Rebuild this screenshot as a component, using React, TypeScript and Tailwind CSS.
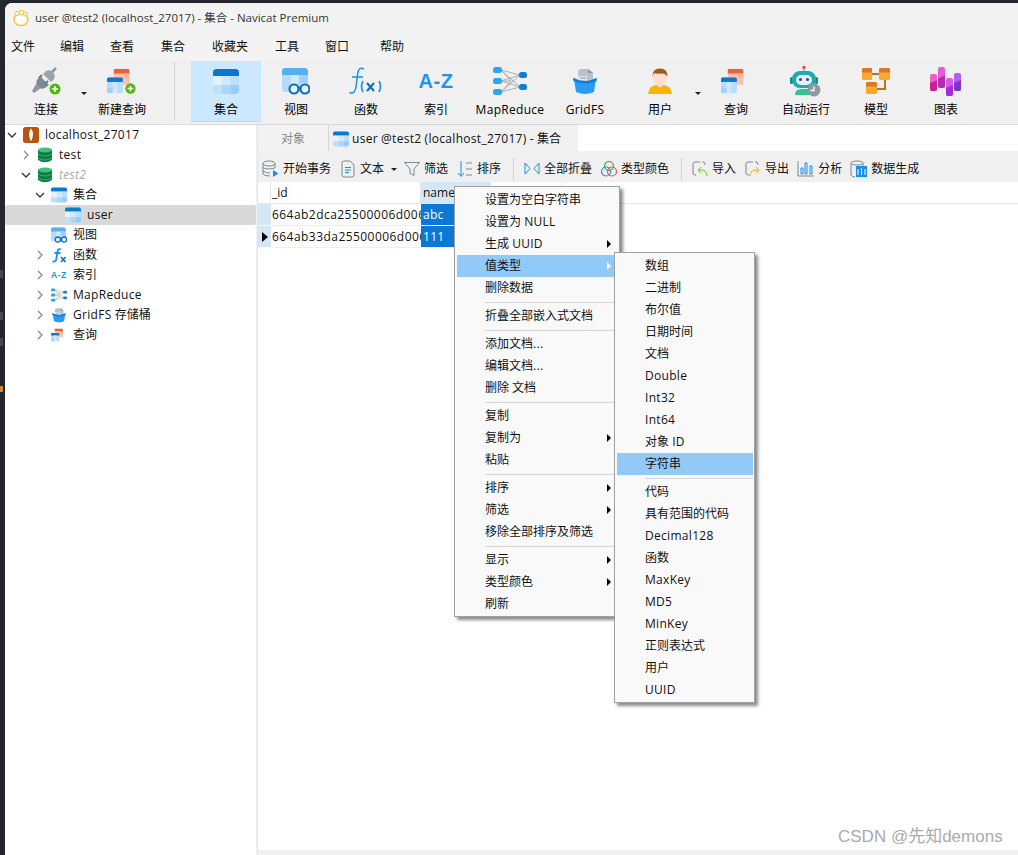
import type { ReactNode } from "react"

const font = "font-['Open_Sans','Noto_Sans_CJK_SC',sans-serif]"

// latin runs are a little narrower here than in the screenshot, cjk runs are right
function Txt({ children }: { children: string }) {
  return (
    <>
      {children.split(/([\x21-\x7e]+)/).map((part, i) =>
        i % 2 ? (
          <span key={i} className="tracking-[0.3px]">
            {part}
          </span>
        ) : (
          part
        ),
      )}
    </>
  )
}

function TableIcon({ className = "w-[26px] h-[25px]", id }: { className?: string; id: string }) {
  const rows = [
    ["#e6f3fe", "#d2e9fc", "#bcdffa"],
    ["#bfe0fb", "#a9d6f9", "#93cdf8"],
  ]
  return (
    <svg viewBox="0 0 26 25" className={className}>
      <clipPath id={id}>
        <rect width="26" height="25" rx="3.5" />
      </clipPath>
      <g clipPath={`url(#${id})`}>
        <rect width="26" height="7" fill="#0b79d0" />
        {rows.map((r, y) =>
          r.map((c, x) => <rect key={`${x}-${y}`} x={x * 8.67} y={7 + y * 9} width="8.7" height="9" fill={c} />),
        )}
      </g>
    </svg>
  )
}

function QueryIcon({ className = "w-[30px] h-[28px]", id, plus }: { className?: string; id: string; plus?: boolean }) {
  return (
    <svg viewBox="0 0 32 28" className={className}>
      <clipPath id={id + "a"}>
        <rect x="7" y="1" width="17" height="17" rx="2" />
      </clipPath>
      <g clipPath={`url(#${id}a)`}>
        <rect x="7" y="1" width="17" height="17" fill="#ffc0ae" />
        <rect x="7" y="1" width="17" height="5" fill="#e8623f" />
        <rect x="18" y="6" width="6" height="5" fill="#ffb09a" />
      </g>
      <clipPath id={id + "b"}>
        <rect x="0" y="10" width="17" height="17" rx="2" />
      </clipPath>
      <g clipPath={`url(#${id}b)`}>
        <rect x="0" y="10" width="17" height="17" fill="#b9dcfa" />
        <rect x="0" y="10" width="17" height="5" fill="#0b79d0" />
        <rect x="6" y="15" width="5" height="12" fill="#cfe7fc" />
        <rect x="0" y="21" width="6" height="6" fill="#a5d3f8" />
      </g>
      {plus && <Plus cx={25} cy={22} />}
    </svg>
  )
}

function Plus({ cx, cy }: { cx: number; cy: number }) {
  return (
    <g>
      <circle cx={cx} cy={cy} r="5.5" fill="#4fb80b" />
      <path d={`M${cx - 3} ${cy}h6M${cx} ${cy - 3}v6`} stroke="#fff" strokeWidth="1.6" />
    </g>
  )
}

function ConnectIcon() {
  return (
    <svg viewBox="0 0 32 28" className="w-[32px] h-[28px]">
      <path d="M10 9l9 9-4 3a6 6 0 0 1-8-8z" fill="#7d8a93" />
      <path d="M6 17l-4 7 2 2 7-5z" fill="#8d98a0" />
      <path d="M13 7l3-3a6 6 0 0 1 8 8l-3 3z" fill="#9aa4ab" />
      <path d="M22 5l4-4" stroke="#8d98a0" strokeWidth="2.5" />
      <path d="M9 11l3-3M15 17l3-3" stroke="#6f7b84" strokeWidth="2" />
      <Plus cx={25} cy={22} />
    </svg>
  )
}

function ViewIcon({ className = "w-[28px] h-[28px]" }: { className?: string }) {
  return (
    <svg viewBox="0 0 28 28" className={className}>
      <rect x="0" y="1" width="26" height="24" rx="3.5" fill="#b5dafa" />
      <path d="M0 8V4.5A3.5 3.5 0 0 1 3.5 1h19A3.5 3.5 0 0 1 26 4.5V8z" fill="#57aef0" />
      <rect x="9" y="8" width="8" height="8" fill="#d0e8fc" />
      <rect x="17" y="8" width="9" height="8" fill="#9fd1f8" />
      <circle cx="12" cy="22" r="4.5" fill="#e8f3fc" stroke="#0d6fbe" strokeWidth="2.2" />
      <circle cx="23" cy="22" r="4.5" fill="#e8f3fc" stroke="#0d6fbe" strokeWidth="2.2" />
      <path d="M16 21h3" stroke="#0d6fbe" strokeWidth="2" />
    </svg>
  )
}

function FxIcon({ small }: { small?: boolean }) {
  if (small)
    return (
      <svg viewBox="0 0 16 16" className="w-4 h-4">
        <path d="M10 2.5C8 1.5 6.8 2.3 6.4 5L5.4 11.5C5 14 4 15 1.5 14.5M3.5 6h6" fill="none" stroke="#1a8fe8" strokeWidth="1.8" />
        <path d="M10 10l4.5 5M14.5 10L10 15" stroke="#0d6fbe" strokeWidth="1.6" />
      </svg>
    )
  return (
    <svg viewBox="0 0 34 28" className="w-[34px] h-[28px]">
      <path d="M15 2C11 0 9.5 2 8.8 6L7 20C6.4 25 4 27 0.5 25.5M3 10h11" fill="none" stroke="#1a8fe8" strokeWidth="1.5" />
      <path d="M14 14q-3 5 0 11M30 14q3 5 0 11" fill="none" stroke="#1a8fe8" strokeWidth="1.7" />
      <path d="M18 16l7 8M25 16l-7 8" stroke="#0d6fbe" strokeWidth="2" />
    </svg>
  )
}

function AzIcon({ small }: { small?: boolean }) {
  return (
    <span
      className={`font-['Liberation_Sans',sans-serif] font-bold tracking-[0.5px] text-[#1c94ee] ${
        small ? "text-[8.5px] leading-4 w-4 whitespace-nowrap" : "text-[20px] leading-7"
      }`}
    >
      A-Z
    </span>
  )
}

function MapReduceIcon({ className = "w-[34px] h-[28px]" }: { className?: string }) {
  const left = [3, 14, 25]
  const right = [8, 20]
  return (
    <svg viewBox="0 0 34 28" className={className}>
      {left.map((l) =>
        right.map((r) => <path key={`${l}${r}`} d={`M8 ${l}L27 ${r}`} stroke="#a9aeb3" strokeWidth="1" />),
      )}
      {left.map((l) => <path key={`m${l}`} d={`M8 ${l}L18 14`} stroke="#a9aeb3" strokeWidth="1" />)}
      {left.map((l) => <rect key={l} x="0" y={l - 3} width="9" height="6" rx="2.5" fill="#2ba6f3" />)}
      {right.map((r) => <rect key={r} x="26" y={r - 3} width="8" height="6" rx="2.5" fill="#0f7fd6" />)}
    </svg>
  )
}

function BucketIcon({ className = "w-[24px] h-[28px]" }: { className?: string }) {
  return (
    <svg viewBox="0 0 24 28" className={className}>
      <path d="M7 2h8l5 4v10H5V4z" fill="#b8c2cc" />
      <path d="M15 2l5 4h-5z" fill="#8e99a5" />
      <path d="M5 9h9v10H5z" fill="#dfe5ea" />
      <path d="M7 11h6M7 14h5" stroke="#8e99a5" strokeWidth="1" />
      <path d="M1 12q11 5 22 0l-2 13q-9 4-18 0z" fill="#2a9bf0" />
      <path d="M0 11.5q1-1 2 0 10 5 20 0 1-1 2 0l-.5 2.5q-11 5-23 0z" fill="#0f7fd6" />
    </svg>
  )
}

function UserIcon() {
  return (
    <svg viewBox="0 0 24 28" className="w-[24px] h-[28px]">
      <path d="M0 27q1-8 8-9h8q7 1 8 9z" fill="#f7b500" />
      <path d="M9 14h6v5q-3 3-6 0z" fill="#fbd3b8" />
      <ellipse cx="12" cy="10" rx="7" ry="8.5" fill="#fde0cb" />
      <path d="M4.5 10Q4 1.5 12 1.5T19.5 10Q18 6 13 6.500 8 7 6 6z" fill="#a05a1c" />
    </svg>
  )
}

function RobotIcon() {
  return (
    <svg viewBox="0 0 32 32" className="w-[32px] h-[32px]">
      <circle cx="14" cy="2.5" r="1.8" fill="#e94b4b" />
      <path d="M14 3v3" stroke="#8a9aa5" strokeWidth="1.2" />
      <rect x="0" y="12" width="3" height="7" rx="1.5" fill="#0d8a8a" />
      <rect x="25" y="12" width="3" height="7" rx="1.5" fill="#0d8a8a" />
      <rect x="2" y="6" width="24" height="17" rx="8" fill="#1eaab0" />
      <rect x="6" y="10" width="16" height="10" rx="5" fill="#e4f1fa" />
      <circle cx="10.5" cy="14.5" r="1.5" fill="#2b4a80" />
      <circle cx="17.5" cy="14.5" r="1.5" fill="#2b4a80" />
      <path d="M5 30q0-6 6-6h6q5 0 6 6z" fill="#35c494" />
      <circle cx="24" cy="25" r="6.5" fill="#8d98a3" />
      <path d="M24 21.5V25.5H20.5" fill="none" stroke="#fff" strokeWidth="1.3" />
    </svg>
  )
}

function ModelIcon() {
  const box = (x: number, y: number, w: number) => (
    <g>
      <rect x={x} y={y} width={w} height="12" rx="1.5" fill="#fca82e" />
      <path d={`M${x} ${y + 4.5}V${y + 1.5}a1.5 1.5 0 0 1 1.5-1.5h${w - 3}a1.5 1.5 0 0 1 1.5 1.5v3z`} fill="#d9772b" />
    </g>
  )
  return (
    <svg viewBox="0 0 28 28" className="w-[28px] h-[28px]">
      <path d="M10 7h8M23 12v10H11" fill="none" stroke="#c06f28" strokeWidth="2" />
      {box(0, 1, 10)}
      {box(17, 1, 11)}
      {box(4, 15, 11)}
    </svg>
  )
}

function ChartIcon() {
  const bar = (x: number, y: number, h: number, c1: string, c2: string) => (
    <g>
      <rect x={x} y={y} width="7" height={h} rx="2" fill={c1} />
      <path d={`M${x} ${y + h * 0.55}l7-3V${y + h - 2}a2 2 0 0 1-2 2h-3a2 2 0 0 1-2-2z`} fill={c2} />
    </g>
  )
  return (
    <svg viewBox="0 0 32 30" className="w-[32px] h-[30px]">
      {bar(0, 8, 17, "#ef5bc8", "#c81f98")}
      {bar(8, 1, 21, "#e85ad8", "#b52cb0")}
      {bar(16, 12, 18, "#d65be8", "#a92bd8")}
      {bar(24, 7, 18, "#b060f5", "#7d36c8")}
    </svg>
  )
}

function Chevron({ open }: { open?: boolean }) {
  return (
    <svg viewBox="0 0 10 10" className="w-[10px] h-[10px]">
      <path
        d={open ? "M1 3l4 4 4-4" : "M3 1l4 4-4 4"}
        fill="none"
        stroke={open ? "#333" : "#8c8c8c"}
        strokeWidth="1.3"
      />
    </svg>
  )
}

function DbIcon() {
  return (
    <svg viewBox="0 0 16 16" className="w-4 h-4">
      <path d="M1 3v10q7 4.5 14 0V3z" fill="#0f7a45" />
      <path d="M1 6.5q7 4 14 0v1q-7 4-14 0zM1 10.5q7 4 14 0v1q-7 4-14 0z" fill="#2fb36c" />
      <ellipse cx="8" cy="3" rx="7" ry="2.5" fill="#3cc27a" />
    </svg>
  )
}

function Button({ label, icon, active }: { label: string; icon: ReactNode; active?: boolean }) {
  return (
    <div
      className={`w-[70px] h-[61px] flex flex-col items-center shrink-0 ${
        active ? "bg-[#cce8ff] border-b border-[#b5dcfa]" : ""
      }`}
    >
      <div className="h-[32px] mt-[4px] flex items-center justify-center">{icon}</div>
      <div className="mt-[5px] h-4 leading-4 text-[12px] text-black whitespace-nowrap">
        <Txt>{label}</Txt>
      </div>
    </div>
  )
}

function DropArrow({ className = "" }: { className?: string }) {
  return <div className={`w-0 h-0 border-x-[3px] border-x-transparent border-t-[3px] border-t-[#222] ${className}`} />
}

type TreeRow = {
  level: number
  label: string
  icon: ReactNode
  chevron?: "open" | "closed"
  selected?: boolean
  muted?: boolean
}

const treeRows: TreeRow[] = [
  {
    level: 0,
    label: "localhost_27017",
    chevron: "open",
    icon: (
      <svg viewBox="0 0 16 16" className="w-4 h-4">
        <rect width="16" height="16" rx="2.5" fill="#b8540f" />
        <path d="M8 1.5Q12 6 8 14.5 4 6 8 1.5z" fill="#fff" />
      </svg>
    ),
  },
  { level: 1, label: "test", chevron: "closed", icon: <DbIcon /> },
  { level: 1, label: "test2", chevron: "open", muted: true, icon: <DbIcon /> },
  { level: 2, label: "集合", chevron: "open", icon: <TableIcon id="t1" className="w-4 h-4" /> },
  { level: 3, label: "user", selected: true, icon: <TableIcon id="t2" className="w-4 h-4" /> },
  { level: 2, label: "视图", icon: <ViewIcon className="w-4 h-4" /> },
  { level: 2, label: "函数", chevron: "closed", icon: <FxIcon small /> },
  { level: 2, label: "索引", chevron: "closed", icon: <AzIcon small /> },
  { level: 2, label: "MapReduce", chevron: "closed", icon: <MapReduceIcon className="w-4 h-4" /> },
  { level: 2, label: "GridFS 存储桶", chevron: "closed", icon: <BucketIcon className="w-4 h-4" /> },
  { level: 2, label: "查询", chevron: "closed", icon: <QueryIcon id="q3" className="w-4 h-4" /> },
]

const levelPad = ["pl-0", "pl-[14px]", "pl-[28px]", "pl-[42px]"]

function Tree() {
  return (
    <div className="w-[251px] shrink-0 bg-white">
      {treeRows.map((r) => (
        <div
          key={r.label}
          className={`h-5 flex items-center rounded-[2px] ${levelPad[r.level]} ${r.selected ? "bg-[#d9d9d9]" : ""}`}
        >
          <div className="w-[14px] flex justify-center shrink-0">
            {r.chevron && <Chevron open={r.chevron === "open"} />}
          </div>
          <div className="ml-1 w-4 h-4 flex items-center justify-center shrink-0">{r.icon}</div>
          <span className={`ml-[6px] text-[12px] whitespace-nowrap ${r.muted ? "italic text-[#aaa]" : "text-[#111]"}`}>
            <Txt>{r.label}</Txt>
          </span>
        </div>
      ))}
    </div>
  )
}

function SmallTool({ label, icon, className = "" }: { label: string; icon: ReactNode; className?: string }) {
  return (
    <div className={`flex items-center shrink-0 ${className}`}>
      <div className="w-[18px] h-[18px] flex items-center justify-center">{icon}</div>
      <span className="ml-[3px] text-[12px] text-[#111] whitespace-nowrap">{label}</span>
    </div>
  )
}

function Toolbar2() {
  const g = "none"
  return (
    <div className="h-[31px] bg-[#f0f0f0] flex items-center pl-[4px] pt-[5px] shrink-0">
      <SmallTool
        label="开始事务"
        icon={
          <svg viewBox="0 0 18 18" className="w-[18px] h-[18px]" fill={g} stroke="#7d8790">
            <ellipse cx="7" cy="3.5" rx="6" ry="2.5" />
            <path d="M1 3.5V14q1 2 7 2M13 3.5V8M1 7.5q3 2.5 12 .5M1 11q3 2 7 2" />
            <path d="M11 10l5.5 3.5L11 17z" fill="#1a8fe8" stroke="none" />
          </svg>
        }
      />
      <SmallTool
        label="文本"
        className="ml-[8px]"
        icon={
          <svg viewBox="0 0 18 18" className="w-[18px] h-[18px]" fill={g}>
            <path d="M3 3q0-2 2-2h6l4 4v10q0 2-2 2H5q-2 0-2-2z" stroke="#7d8790" />
            <path d="M6 7.5h6M6 10h6M6 12.5h4" stroke="#1a8fe8" />
          </svg>
        }
      />
      <DropArrow className="ml-[7px]" />
      <SmallTool
        label="筛选"
        className="ml-[6px]"
        icon={
          <svg viewBox="0 0 18 18" className="w-[18px] h-[18px]" fill={g} stroke="#7d8790">
            <path d="M1.5 2.5h15L11 9v6.5l-4-2V9z" />
          </svg>
        }
      />
      <SmallTool
        label="排序"
        className="ml-[8px]"
        icon={
          <svg viewBox="0 0 18 18" className="w-[18px] h-[18px]" fill={g}>
            <path d="M5 1v15M2 13l3 3.5L8 13" stroke="#1a8fe8" />
            <path d="M10 3h6M10 9h6M10 15h6" stroke="#7d8790" />
          </svg>
        }
      />
      <div className="ml-[12px] w-px h-[23px] bg-[#d5d5d5]" />
      <SmallTool
        label="全部折叠"
        className="ml-[9px]"
        icon={
          <svg viewBox="0 0 18 18" className="w-[18px] h-[18px]" fill={g} stroke="#1a8fe8">
            <path d="M2 3v11l5-5.5zM16 3v11l-5-5.5z" />
          </svg>
        }
      />
      <SmallTool
        label="类型颜色"
        className="ml-[8px]"
        icon={
          <svg viewBox="0 0 18 18" className="w-[18px] h-[18px]" fill={g} strokeWidth="1.2">
            <circle cx="9" cy="6" r="4.5" stroke="#3aa53a" />
            <circle cx="6" cy="11.5" r="4.5" stroke="#1a8fe8" />
            <circle cx="12" cy="11.5" r="4.5" stroke="#e2574c" />
          </svg>
        }
      />
      <div className="ml-[12px] w-px h-[23px] bg-[#d5d5d5]" />
      <SmallTool
        label="导入"
        className="ml-[9px]"
        icon={
          <svg viewBox="0 0 18 18" className="w-[18px] h-[18px]" fill={g}>
            <path d="M9 2H4Q2 2 2 4v9q0 2 2 2h1M11 2h1q2 0 2 2v1" stroke="#7d8790" />
            <path d="M16 16q0-6-6-6H7M10 7l-3 3 3 3" stroke="#6cc32c" />
          </svg>
        }
      />
      <SmallTool
        label="导出"
        className="ml-[8px]"
        icon={
          <svg viewBox="0 0 18 18" className="w-[18px] h-[18px]" fill={g}>
            <path d="M9 2H4Q2 2 2 4v9q0 2 2 2h1M11 2h1q2 0 2 2v1" stroke="#7d8790" />
            <path d="M6 16q0-6 6-6h3M12 7l3 3-3 3" stroke="#f5a623" />
          </svg>
        }
      />
      <SmallTool
        label="分析"
        className="ml-[8px]"
        icon={
          <svg viewBox="0 0 18 18" className="w-[18px] h-[18px]" fill={g}>
            <path d="M1 1v15h16" stroke="#7d8790" />
            <path d="M4 8h2v6H4zM8 3h2v11H8zM13 6h2v8h-2z" stroke="#1a8fe8" />
          </svg>
        }
      />
      <SmallTool
        label="数据生成"
        className="ml-[8px]"
        icon={
          <svg viewBox="0 0 18 18" className="w-[18px] h-[18px]" fill={g}>
            <ellipse cx="7" cy="3" rx="6" ry="2" stroke="#7d8790" />
            <path d="M1 3v12q1 2 4 2M13 3v3" stroke="#7d8790" />
            <rect x="6" y="6" width="11" height="11" fill="#1a8fe8" />
            <path d="M8 9v6M11.5 8v7M15 9v6" stroke="#fff" />
          </svg>
        }
      />
    </div>
  )
}

function Grid() {
  return (
    <div className="flex-1 bg-white text-[12px] min-h-0">
      <div className="flex h-[21px] border-b border-[#e5e5e5] box-content">
        <div className="w-[13px] border-r border-[#e5e5e5]" />
        <div className="w-[150px] pl-[1px] leading-[21px] text-[#111] border-r border-[#e5e5e5]">_id</div>
        <div className="w-[70px] pl-[2px] leading-[21px] bg-[#d5e7f5] text-[#111]">name</div>
        <div className="w-[72px] border-r border-[#e5e5e5]" />
      </div>
      {[
        { id: "664ab2dca25500006d006", v: "abc", arrow: false },
        { id: "664ab33da25500006d006", v: "111", arrow: true },
      ].map((r) => (
        <div key={r.v} className="flex h-[22px]">
          <div className="w-[13px] bg-[#d5e7f5] border-b border-white flex items-center justify-center">
            {r.arrow && (
              <div className="w-0 h-0 border-y-[5px] border-y-transparent border-l-[6px] border-l-black" />
            )}
          </div>
          <div className="w-[150px] pl-[1px] leading-[22px] text-[#111] tracking-[0.45px] overflow-hidden whitespace-nowrap border-b border-[#eee]">
            {r.id}
          </div>
          <div className="w-[70px] pl-[2px] leading-[22px] bg-[#0a78d7] text-white tracking-[0.3px] border-b border-white">
            {r.v}
          </div>
        </div>
      ))}
    </div>
  )
}

type MenuEntry = { label?: string; sub?: boolean; hot?: boolean }

const sep: MenuEntry = {}

const mainMenu: MenuEntry[] = [
  { label: "设置为空白字符串" },
  { label: "设置为 NULL" },
  { label: "生成 UUID", sub: true },
  { label: "值类型", sub: true, hot: true },
  { label: "删除数据" },
  sep,
  { label: "折叠全部嵌入式文档" },
  sep,
  { label: "添加文档..." },
  { label: "编辑文档..." },
  { label: "删除 文档" },
  sep,
  { label: "复制" },
  { label: "复制为", sub: true },
  { label: "粘贴" },
  sep,
  { label: "排序", sub: true },
  { label: "筛选", sub: true },
  { label: "移除全部排序及筛选" },
  sep,
  { label: "显示", sub: true },
  { label: "类型颜色", sub: true },
  { label: "刷新" },
]

const typeMenu: MenuEntry[] = [
  { label: "数组" },
  { label: "二进制" },
  { label: "布尔值" },
  { label: "日期时间" },
  { label: "文档" },
  { label: "Double" },
  { label: "Int32" },
  { label: "Int64" },
  { label: "对象 ID" },
  { label: "字符串", hot: true },
  sep,
  { label: "代码" },
  { label: "具有范围的代码" },
  { label: "Decimal128" },
  { label: "函数" },
  { label: "MaxKey" },
  { label: "MD5" },
  { label: "MinKey" },
  { label: "正则表达式" },
  { label: "用户" },
  { label: "UUID" },
]

function Menu({ items, className }: { items: MenuEntry[]; className: string }) {
  return (
    <div
      className={`absolute bg-[#f9f9f9] border border-[#a0a0a0] pt-[2px] pb-[1px] pl-[2px] pr-[1px] shadow-[3px_3px_3px_rgba(0,0,0,0.45)] ${className}`}
    >
      {items.map((m, i) =>
        m.label ? (
          <div
            key={i}
            className={`relative h-[22px] pl-[28px] leading-[22px] text-[12px] text-[#111] whitespace-nowrap ${
              m.hot ? "bg-[#91c9f7]" : ""
            }`}
          >
            <Txt>{m.label}</Txt>
            {m.sub && (
              <div
                className={`absolute right-[7px] top-[7px] w-0 h-0 border-y-[4px] border-y-transparent border-l-[4px] ${
                  m.hot ? "border-l-white" : "border-l-black"
                }`}
              />
            )}
          </div>
        ) : (
          <div key={i} className="h-[6px] pl-[28px] flex items-center">
            <div className="h-px w-full bg-[#d7d7d7]" />
          </div>
        ),
      )}
    </div>
  )
}

export default function App() {
  return (
    <div className={`relative w-[1018px] h-[855px] bg-[#24262d] pl-[5px] pt-[3px] overflow-hidden ${font}`}>
      {/* bits of the window behind, only a few pixels show */}
      <div className="absolute left-0 top-[386px] w-[3px] h-[6px] bg-[#c98a3c]" />
      <div className="absolute left-0 top-[270px] w-[3px] h-[8px] bg-[#43474e]" />
      <div className="absolute left-0 top-[312px] w-[3px] h-[8px] bg-[#43474e]" />
      <div className="absolute left-0 top-[338px] w-[3px] h-[8px] bg-[#43474e]" />
      <div className="h-full flex flex-col bg-[#f0f0f0] rounded-tl-[7px] overflow-hidden">
        {/* title */}
        <div className="h-[29px] bg-[#f3f3f3] flex items-center pl-[8px] shrink-0">
          <svg viewBox="0 0 16 16" className="w-4 h-4">
            <ellipse cx="8" cy="9.5" rx="7" ry="6" fill="#fff" stroke="#f2c230" strokeWidth="1.4" />
            <circle cx="4" cy="3.5" r="2.2" fill="#fff" stroke="#f2c230" />
            <circle cx="8.5" cy="2.5" r="2.2" fill="#fff" stroke="#f2c230" />
            <circle cx="12.5" cy="4" r="2" fill="#fff" stroke="#f2c230" />
          </svg>
          <span className="ml-[6px] text-[11.5px] text-[#333] whitespace-nowrap">
            user @test2 (localhost_27017) - 集合 - Navicat Premium
          </span>
        </div>
        {/* menu bar */}
        <div className="h-[28px] bg-[#f3f3f3] flex items-center pl-[6px] pt-[2px] text-[12px] text-[#111] shrink-0">
          <span className="w-[49px]">文件</span>
          <span className="w-[50px]">编辑</span>
          <span className="w-[51px]">查看</span>
          <span className="w-[51px]">集合</span>
          <span className="w-[63px]">收藏夹</span>
          <span className="w-[50px]">工具</span>
          <span className="w-[55px]">窗口</span>
          <span>帮助</span>
        </div>
        {/* main toolbar */}
        <div className="h-[65px] bg-[#f0f0f0] flex pl-[6px] pt-[1px] border-b border-[#d9d9d9] shrink-0">
          <Button label="连接" icon={<ConnectIcon />} />
          <div className="w-[6px] flex items-center">
            <DropArrow className="mt-[2px]" />
          </div>
          <Button label="新建查询" icon={<QueryIcon id="q1" plus />} />
          <div className="ml-[17px] mt-[1px] w-px h-[59px] bg-[#d5d5d5]" />
          <div className="w-[16px]" />
          <Button label="集合" active icon={<TableIcon id="t0" />} />
          <Button label="视图" icon={<ViewIcon />} />
          <Button label="函数" icon={<FxIcon />} />
          <Button label="索引" icon={<AzIcon />} />
          <div className="w-[4px]" />
          <Button label="MapReduce" icon={<MapReduceIcon />} />
          <div className="w-[5px]" />
          <Button label="GridFS" icon={<BucketIcon />} />
          <div className="w-[5px]" />
          <Button label="用户" icon={<UserIcon />} />
          <div className="w-[6px] flex items-center">
            <DropArrow className="mt-[2px]" />
          </div>
          <Button label="查询" icon={<QueryIcon id="q2" />} />
          <Button label="自动运行" icon={<RobotIcon />} />
          <Button label="模型" icon={<ModelIcon />} />
          <Button label="图表" icon={<ChartIcon />} />
        </div>
        <div className="flex flex-1 min-h-0">
          <Tree />
          <div className="flex-1 ml-[1px] flex flex-col min-w-0 border-l border-[#e5e5e5] pb-[5px] bg-[#f0f0f0]">
            {/* tabs */}
            <div className="h-[26px] flex shrink-0 bg-white">
              <div className="w-[71px] bg-[#f3f3f3] border-r border-[#d5d5d5] flex items-center justify-center pt-[1px] text-[12px] text-[#888]">
                对象
              </div>
              <div className="w-[249px] bg-[#f0f0f0] flex items-center pl-[4px] pt-[1px] text-[12px] text-[#111] whitespace-nowrap">
                <TableIcon id="t3" className="w-4 h-4" />
                <span className="ml-[3px]">
                  <Txt>user @test2 (localhost_27017) - 集合</Txt>
                </span>
              </div>
            </div>
            <Toolbar2 />
            <Grid />
          </div>
        </div>
      </div>
      <Menu items={mainMenu} className="left-[454px] top-[186px] w-[166px]" />
      <Menu items={typeMenu} className="left-[614px] top-[252px] w-[141px]" />
      <div className="absolute left-[838px] top-[827px] text-[17px] leading-5 text-[#aaa] font-['Liberation_Sans','Noto_Sans_CJK_SC',sans-serif] whitespace-nowrap">
        CSDN @先知demons
      </div>
    </div>
  )
}
